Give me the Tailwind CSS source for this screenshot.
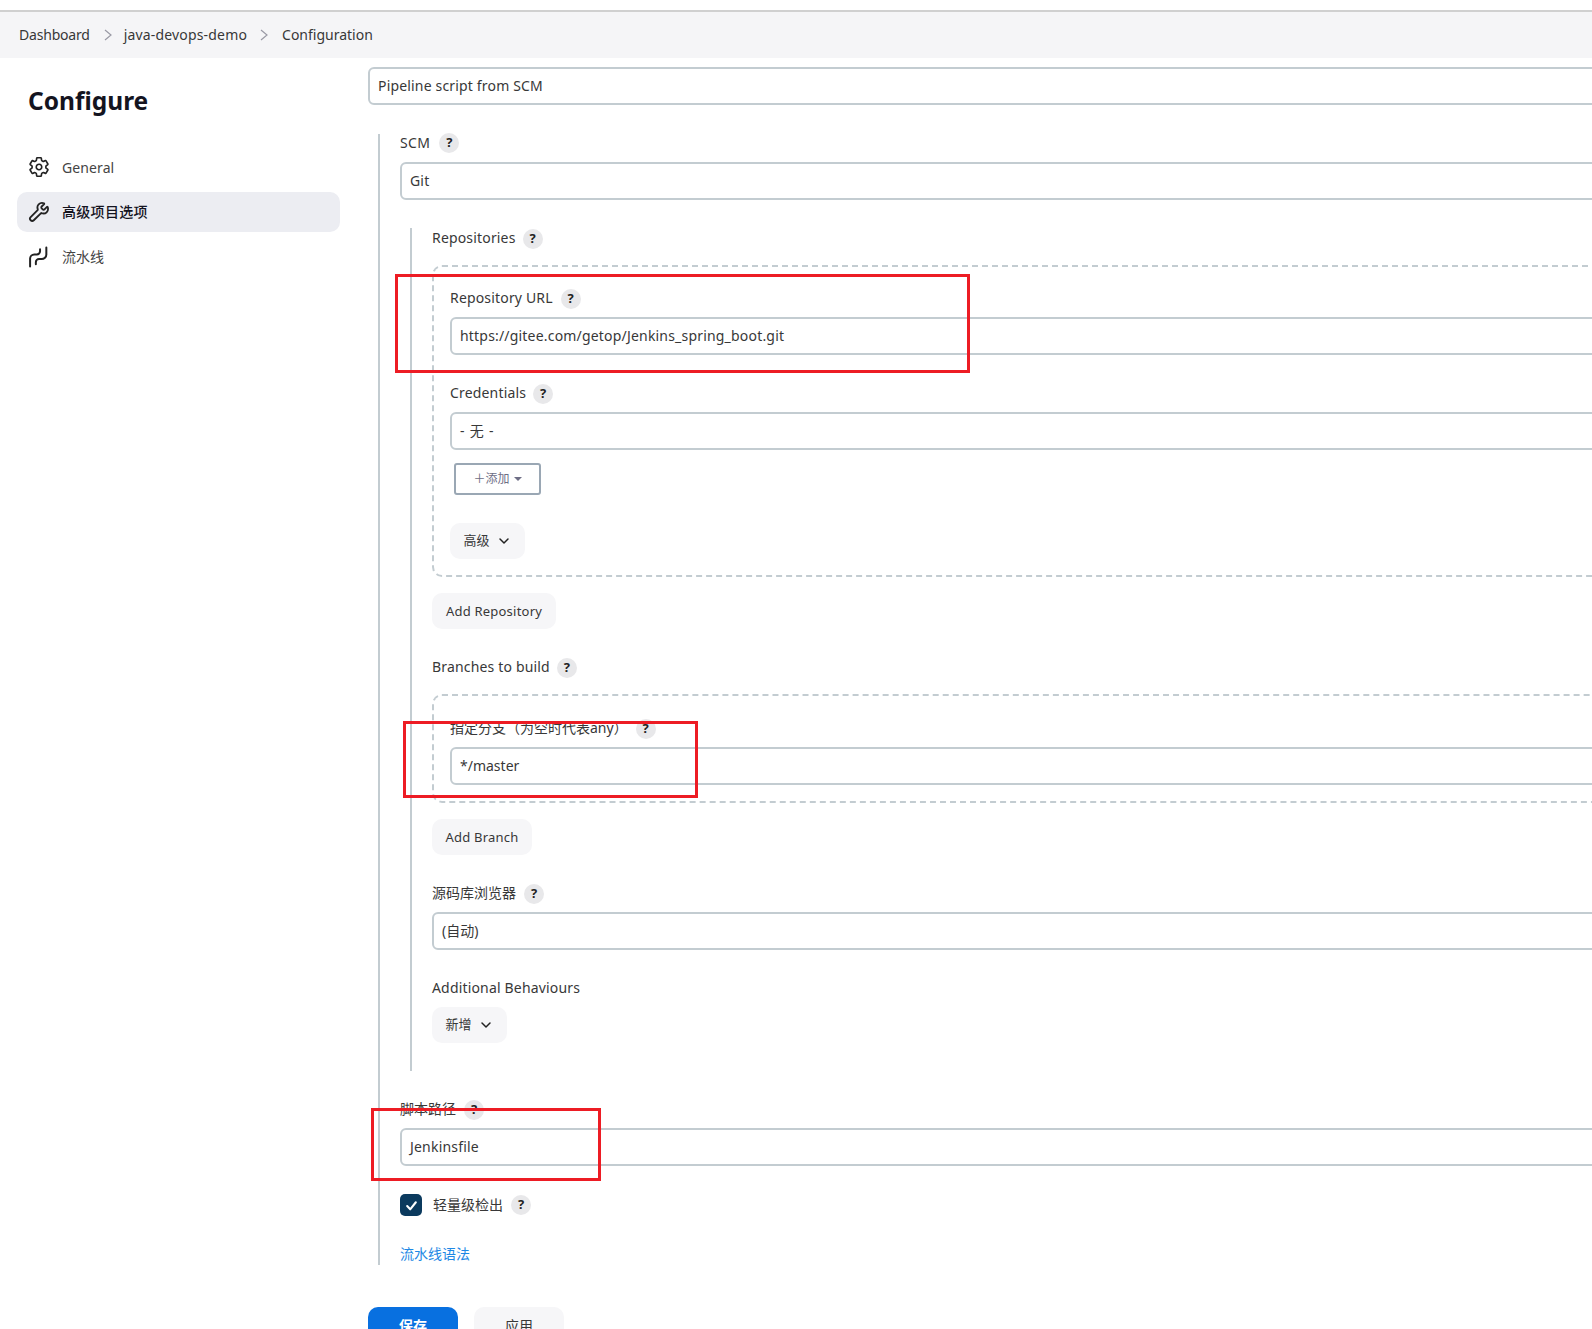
<!DOCTYPE html>
<html lang="zh"><head><meta charset="utf-8"><title>Configure</title>
<script src="https://cdn.jsdelivr.net/npm/@tailwindcss/browser@4"></script></head>
<body class="bg-white overflow-hidden">
<div class="relative w-[1592px] h-[1329px] overflow-hidden bg-white text-[#383838] text-[14px] font-['Noto_Sans','Noto_Sans_CJK_SC',sans-serif]">
  <div class="mt-[10px] h-[48px] border-t-2 border-[#d0d0d0] bg-[#f5f5f7] flex items-center pl-[19px] pb-[1px] gap-[13px]">
    <span class="tracking-[-0.2px]">Dashboard</span>
    <svg class="-mr-[2px] w-[10px] h-[12px] text-[#9a9aa5]" viewBox="0 0 10 12" fill="none" stroke="currentColor" stroke-width="1.2"><path d="M2 1l6 5-6 5"/></svg>
    <span class="tracking-[0.17px]">java-devops-demo</span>
    <svg class="-ml-[1px] w-[10px] h-[12px] text-[#9a9aa5]" viewBox="0 0 10 12" fill="none" stroke="currentColor" stroke-width="1.2"><path d="M2 1l6 5-6 5"/></svg>
    <span>Configuration</span>
  </div>
  <div class="flex">
    <aside class="w-[368px] shrink-0 pl-[17px]">
      <h1 class="mt-[26px] ml-[11px] text-[24.5px] leading-[34px] font-bold text-[#14141f]">Configure</h1>
      <nav class="mt-[29px] w-[323px] flex flex-col gap-[5px]">
        <a class="h-[40px] pl-[11px] flex items-center gap-[12px] text-[#444] tracking-[0.1px]">
          <svg class="w-[22px] h-[22px]" viewBox="0 0 512 512" fill="none" stroke="#222" stroke-width="38" stroke-linecap="round" stroke-linejoin="round"><path d="M262.29 192.31a64 64 0 1057.4 57.4 64.13 64.13 0 00-57.4-57.4zM416.39 256a154.34 154.34 0 01-1.53 20.79l45.21 35.46a10.81 10.81 0 012.45 13.75l-42.77 74a10.81 10.81 0 01-13.14 4.59l-44.9-18.08a16.11 16.11 0 00-15.17 1.75A164.48 164.48 0 01325 400.8a15.94 15.94 0 00-8.82 12.14l-6.73 47.89a11.08 11.08 0 01-10.68 9.17h-85.54a11.11 11.11 0 01-10.69-8.87l-6.72-47.82a16.07 16.07 0 00-9-12.22 155.3 155.3 0 01-21.46-12.57 16 16 0 00-15.11-1.71l-44.89 18.07a10.81 10.81 0 01-13.14-4.58l-42.77-74a10.8 10.8 0 012.45-13.75l38.21-30a16.05 16.05 0 006-14.08c-.36-4.17-.58-8.33-.58-12.5s.21-8.27.58-12.35a16 16 0 00-6.07-13.94l-38.19-30A10.81 10.81 0 0149.48 186l42.77-74a10.81 10.81 0 0113.14-4.59l44.9 18.08a16.11 16.11 0 0015.17-1.75A164.48 164.48 0 01187 111.2a15.94 15.94 0 008.82-12.14l6.73-47.89A11.08 11.08 0 01213.23 42h85.54a11.11 11.11 0 0110.69 8.87l6.72 47.82a16.07 16.07 0 009 12.22 155.3 155.3 0 0121.46 12.57 16 16 0 0015.11 1.71l44.89-18.07a10.81 10.81 0 0113.14 4.58l42.77 74a10.8 10.8 0 01-2.45 13.75l-38.21 30a16.05 16.05 0 00-6.05 14.08c.33 4.14.55 8.3.55 12.47z"/></svg>
          <span>General</span>
        </a>
        <a class="h-[40px] pl-[11px] flex items-center gap-[12px] rounded-[10px] bg-[#ecedf2] font-medium text-[#14141f] tracking-[0.3px]">
          <svg class="w-[22px] h-[22px]" viewBox="0 0 24 24" fill="none" stroke="#222" stroke-width="2" stroke-linecap="round" stroke-linejoin="round"><path d="M21.5 6.6a.5.5 0 0 0-.8-.2L18 9.1a1.4 1.4 0 0 1-2 0l-1.1-1.1a1.4 1.4 0 0 1 0-2l2.7-2.7a.5.5 0 0 0-.2-.8c-2-.7-4.3-.3-5.8 1.2-1.5 1.5-1.6 3.6-.9 5.5a.7.7 0 0 1-.2.8L2.900 17.600a2.400 2.400 0 0 0 3.400 3.400l7.700-7.600a.7.7 0 0 1 .8-.2c1.900.7 4 .6 5.500-.9 1.500-1.500 1.900-3.700 1.200-5.700z"/></svg>
          <span class="-mt-[2px]">高级项目选项</span>
        </a>
        <a class="h-[40px] pl-[11px] flex items-center gap-[12px] text-[#444]">
          <svg class="w-[22px] h-[22px]" viewBox="0 0 21 21" fill="none" stroke="#222" stroke-width="1.9" stroke-linecap="round" stroke-linejoin="round"><path d="M2 19.500V12a4 4 0 0 1 4-4h2.500a3 3 0 0 0 3-3V3M17.500 1.500V8a4.500 4.500 0 0 1-4.500 4.500h-2.500a3 3 0 0 0-3 3v2"/></svg>
          <span class="-mt-[2px]">流水线</span>
        </a>
      </nav>
    </aside>
    <main class="flex-1 min-w-0 pt-[9px]">
      <div class="h-[38px] w-[1300px] border-2 border-[#c3ccd1] rounded-[6px] pl-[8px] pb-[2px] flex items-center tracking-[0.17px]">Pipeline script from SCM</div>
      <div class="flow-root mt-[29px] ml-[10px] border-l-2 border-[#c3ccd1] pl-[20px] h-[1131px]">
        <div class="h-[20px] flex items-center gap-[9px] -mt-[2px] tracking-[0.4px]"><span>SCM</span><span class="mt-[2px] w-[20px] h-[20px] rounded-full bg-[#e8e8ea] flex items-center justify-center text-[13px] font-bold text-[#222]">?</span></div>
        <div class="mt-[10px] h-[38px] w-[1300px] border-2 border-[#c3ccd1] rounded-[6px] pl-[8px] pb-[2px] flex items-center tracking-[0.17px]">Git</div>
        <div class="mt-[28px] ml-[10px] border-l-2 border-[#c3ccd1] pl-[20px] h-[843px]">
          <div class="h-[20px] flex items-center gap-[8px] tracking-[0.17px]"><span class="-mt-[2px]">Repositories</span><span class="-ml-[1px] mt-[2px] w-[20px] h-[20px] rounded-full bg-[#e8e8ea] flex items-center justify-center text-[13px] font-bold text-[#222]">?</span></div>
          <div class="mt-[17px] h-[312px] w-[1300px] border-2 border-dashed border-[#c3ccd1] rounded-[10px] pl-[16px] pt-[21px]">
            <div class="h-[20px] flex items-center gap-[8px] tracking-[0.17px]"><span class="-mt-[2px]">Repository URL</span><span class="mt-[2px] w-[20px] h-[20px] rounded-full bg-[#e8e8ea] flex items-center justify-center text-[13px] font-bold text-[#222]">?</span></div>
            <div class="mt-[9px] h-[38px] border-2 border-[#c3ccd1] rounded-[6px] pl-[8px] pb-[2px] flex items-center tracking-[0.19px]">https://gitee.com/getop/Jenkins_spring_boot.git</div>
            <div class="mt-[28px] h-[20px] flex items-center gap-[8px] tracking-[0.17px]"><span class="-mt-[2px]">Credentials</span><span class="-ml-[1px] mt-[2px] w-[20px] h-[20px] rounded-full bg-[#e8e8ea] flex items-center justify-center text-[13px] font-bold text-[#222]">?</span></div>
            <div class="mt-[9px] h-[38px] border-2 border-[#c3ccd1] rounded-[6px] pl-[8px] pb-[2px] flex items-center tracking-[0.8px]">- 无 -</div>
            <div class="mt-[13px] ml-[4px] h-[32px] w-[87px] border-2 border-[#9aa7b4] rounded-[3px] flex items-center justify-center gap-[4px] text-[12px] text-[#6e6e85]">
              <span>＋添加</span><span class="w-0 h-0 border-x-[4px] border-x-transparent border-t-[4px] border-t-[#6e6e85]"></span>
            </div>
            <div class="mt-[28px] h-[36px] w-[75px] rounded-[10px] bg-[#f6f6f8] flex items-center justify-center gap-[8px] pr-[2px]">
              <span class="text-[13px]">高级</span>
              <svg class="w-[12px] h-[12px]" viewBox="0 0 12 12" fill="none" stroke="#222" stroke-width="1.500" stroke-linecap="round" stroke-linejoin="round"><path d="M2 4l4 4 4-4"/></svg>
            </div>
          </div>
          <div class="mt-[16px] h-[36px] w-[124px] rounded-[10px] bg-[#f6f6f8] pt-[2px] flex items-center justify-center text-[13px] tracking-[0.22px]">Add Repository</div>
          <div class="mt-[28px] h-[20px] flex items-center gap-[8px] tracking-[0.17px]"><span class="-mt-[2px]">Branches to build</span><span class="-ml-[1px] mt-[2px] w-[20px] h-[20px] rounded-full bg-[#e8e8ea] flex items-center justify-center text-[13px] font-bold text-[#222]">?</span></div>
          <div class="mt-[17px] h-[109px] w-[1300px] border-2 border-dashed border-[#c3ccd1] rounded-[10px] pl-[16px] pt-[22px]">
            <div class="h-[20px] flex items-center gap-[8px]"><span class="-mt-[2px]">指定分支（为空时代表any）</span><span class="mt-[2px] w-[20px] h-[20px] rounded-full bg-[#e8e8ea] flex items-center justify-center text-[13px] font-bold text-[#222]">?</span></div>
            <div class="mt-[9px] h-[38px] border-2 border-[#c3ccd1] rounded-[6px] pl-[8px] pb-[2px] flex items-center">*/master</div>
          </div>
          <div class="mt-[16px] h-[36px] w-[100px] rounded-[10px] bg-[#f6f6f8] pt-[2px] flex items-center justify-center text-[13px] tracking-[0.2px]">Add Branch</div>
          <div class="mt-[28px] h-[20px] flex items-center gap-[8px]"><span class="-mt-[2px]">源码库浏览器</span><span class="mt-[2px] w-[20px] h-[20px] rounded-full bg-[#e8e8ea] flex items-center justify-center text-[13px] font-bold text-[#222]">?</span></div>
          <div class="mt-[9px] h-[38px] w-[1300px] border-2 border-[#c3ccd1] rounded-[6px] pl-[8px] pb-[2px] flex items-center">(自动)</div>
          <div class="mt-[28px] h-[20px] flex items-center tracking-[0.17px]"><span class="-mt-[2px]">Additional Behaviours</span></div>
          <div class="mt-[9px] h-[36px] w-[75px] rounded-[10px] bg-[#f6f6f8] flex items-center justify-center gap-[8px] pr-[2px]">
            <span class="text-[13px]">新增</span>
            <svg class="w-[12px] h-[12px]" viewBox="0 0 12 12" fill="none" stroke="#222" stroke-width="1.500" stroke-linecap="round" stroke-linejoin="round"><path d="M2 4l4 4 4-4"/></svg>
          </div>
        </div>
        <div class="mt-[28px] h-[20px] flex items-center gap-[8px]"><span class="-mt-[2px]">脚本路径</span><span class="mt-[2px] w-[20px] h-[20px] rounded-full bg-[#e8e8ea] flex items-center justify-center text-[13px] font-bold text-[#222]">?</span></div>
        <div class="mt-[9px] h-[38px] w-[1300px] border-2 border-[#c3ccd1] rounded-[6px] pl-[8px] pb-[2px] flex items-center tracking-[0.2px]">Jenkinsfile</div>
        <div class="mt-[28px] flex items-center gap-[11px] h-[22px]">
          <span class="w-[22px] h-[22px] rounded-[5px] bg-[#0b3a5e] flex items-center justify-center">
            <svg class="w-[13px] h-[13px]" viewBox="0 0 12 12" fill="none" stroke="#fff" stroke-width="1.900" stroke-linecap="round" stroke-linejoin="round"><path d="M2 6.500l2.800 3L10 3"/></svg>
          </span>
          <span class="flex items-center gap-[8px]"><span class="-mt-[2px]">轻量级检出</span><span class="w-[20px] h-[20px] rounded-full bg-[#e8e8ea] flex items-center justify-center text-[13px] font-bold text-[#222]">?</span></span>
        </div>
        <a class="mt-[28px] block h-[20px] leading-[20px] text-[#1e88e5]">流水线语法</a>
      </div>
      <div class="mt-[42px] flex gap-[16px]">
        <span class="w-[90px] h-[36px] rounded-[10px] bg-[#0870e0] text-white font-bold flex items-center justify-center">保存</span>
        <span class="w-[90px] h-[36px] rounded-[10px] bg-[#f6f6f8] flex items-center justify-center">应用</span>
      </div>
    </main>
  </div>
  <div class="absolute left-[395px] top-[274px] w-[575px] h-[99px] border-[3px] border-[#ed1c24]"></div>
  <div class="absolute left-[403px] top-[721px] w-[295px] h-[77px] border-[3px] border-[#ed1c24]"></div>
  <div class="absolute left-[371px] top-[1108px] w-[230px] h-[73px] border-[3px] border-[#ed1c24]"></div>
</div>
</body></html>
